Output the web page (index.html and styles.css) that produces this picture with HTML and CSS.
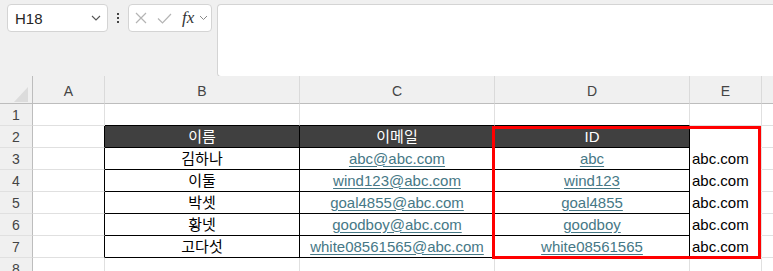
FILE: index.html
```html
<!DOCTYPE html>
<html lang="ko">
<head>
    <meta charset="UTF-8">
    <title>Sheet</title>
    <link rel="stylesheet" href="styles.css">
</head>
<body>
    <div class="toolbar">
        <div class="name-box">
            <span>H18</span>
            <svg class="chev" width="10" height="6" viewBox="0 0 10 6"><path d="M1 1 L5 5 L9 1" fill="none" stroke="#555" stroke-width="1.1"/></svg>
        </div>
        <div class="dots"><i></i><i></i><i></i></div>
        <div class="fx-group">
            <svg width="12" height="12" viewBox="0 0 12 12"><path d="M1 1 L11 11 M11 1 L1 11" stroke="#b4b4b4" stroke-width="1.2"/></svg>
            <svg width="15" height="11" viewBox="0 0 15 11"><path d="M1 5.5 L5.5 10 L14 1" fill="none" stroke="#b4b4b4" stroke-width="1.2"/></svg>
            <span class="fx">fx</span>
            <svg width="9" height="6" viewBox="0 0 9 6"><path d="M1 1 L4.5 4.5 L8 1" fill="none" stroke="#888" stroke-width="1"/></svg>
        </div>
        <div class="formula-input"></div>
    </div>

    <div class="sheet">
        <table class="grid">
            <colgroup>
                <col class="w-rh"><col class="w-narrow"><col class="w-wide"><col class="w-wide"><col class="w-wide"><col class="w-narrow"><col class="w-rest">
            </colgroup>
            <tr class="col-head">
                <th class="corner"><svg width="14" height="15" viewBox="0 0 14 15"><path d="M14 0 L14 15 L0 15 Z" fill="#dcdcdc"/></svg></th>
                <th>A</th><th>B</th><th>C</th><th>D</th><th>E</th><th></th>
            </tr>
            <tr>
                <th class="row-num">1</th>
                <td></td><td class="top-edge"></td><td class="top-edge"></td><td class="top-edge"></td><td></td><td></td>
            </tr>
            <tr>
                <th class="row-num">2</th>
                <td class="left-edge"></td>
                <td class="box head">이름</td>
                <td class="box head">이메일</td>
                <td class="box head">ID</td>
                <td class="blank"></td><td></td>
            </tr>
            <tr>
                <th class="row-num">3</th>
                <td class="left-edge"></td>
                <td class="box">김하나</td>
                <td class="box"><a href="#">abc@abc.com</a></td>
                <td class="box"><a href="#">abc</a></td>
                <td class="blank domain">abc.com</td><td></td>
            </tr>
            <tr>
                <th class="row-num">4</th>
                <td class="left-edge"></td>
                <td class="box">이둘</td>
                <td class="box"><a href="#">wind123@abc.com</a></td>
                <td class="box"><a href="#">wind123</a></td>
                <td class="blank domain">abc.com</td><td></td>
            </tr>
            <tr>
                <th class="row-num">5</th>
                <td class="left-edge"></td>
                <td class="box">박셋</td>
                <td class="box"><a href="#">goal4855@abc.com</a></td>
                <td class="box"><a href="#">goal4855</a></td>
                <td class="blank domain">abc.com</td><td></td>
            </tr>
            <tr>
                <th class="row-num">6</th>
                <td class="left-edge"></td>
                <td class="box">황넷</td>
                <td class="box"><a href="#">goodboy@abc.com</a></td>
                <td class="box"><a href="#">goodboy</a></td>
                <td class="blank domain">abc.com</td><td></td>
            </tr>
            <tr>
                <th class="row-num">7</th>
                <td class="left-edge"></td>
                <td class="box">고다섯</td>
                <td class="box"><a href="#">white08561565@abc.com</a></td>
                <td class="box"><a href="#">white08561565</a></td>
                <td class="blank domain">abc.com</td><td></td>
            </tr>
            <tr>
                <th class="row-num">8</th>
                <td></td><td></td><td></td><td></td><td></td><td></td>
            </tr>
        </table>
        <div class="selection"></div>
    </div>
</body>
</html>
```

FILE: styles.css
```css
body {
    margin: 0;
    background-color: #ffffff;
    font-family: 'Liberation Sans', 'Noto Sans CJK KR', sans-serif;
    overflow: hidden;
}

.toolbar {
    display: flex;
    align-items: flex-start;
    height: 76px;
    padding: 4px 0 0 7px;
    box-sizing: border-box;
    background-color: #f0f0f0;
}

.name-box {
    display: flex;
    align-items: center;
    justify-content: space-between;
    width: 101px;
    height: 28px;
    padding: 0 6px 0 7px;
    box-sizing: border-box;
    background-color: #fff;
    border: 1px solid #d4d4d4;
    border-radius: 4px;
    font-size: 15px;
    color: #262626;
}

.dots {
    display: flex;
    flex-direction: column;
    gap: 2px;
    margin: 9px 9px 0 9px;
}

.dots i {
    display: block;
    width: 2px;
    height: 2px;
    background-color: #444;
}

.fx-group {
    display: flex;
    align-items: center;
    gap: 10px;
    width: 84px;
    height: 28px;
    padding-left: 6px;
    box-sizing: border-box;
    background-color: #fff;
    border: 1px solid #d4d4d4;
    border-radius: 4px;
}

.fx-group .fx {
    font-family: 'Liberation Serif', serif;
    font-style: italic;
    font-size: 17px;
    color: #333;
    margin-right: -5px;
}

.formula-input {
    flex: 1;
    height: 71px;
    margin-left: 5px;
    background-color: #fff;
    border: 1px solid #d4d4d4;
    border-right: none;
    border-radius: 4px 0 0 4px;
}

.sheet {
    position: relative;
}

.grid {
    table-layout: fixed;
    width: 862px;
    border-collapse: separate;
    border-spacing: 0;
}

.w-rh { width: 33px; }
.w-narrow { width: 72px; }
.w-wide { width: 195px; }
.w-rest { width: 100px; }

.grid th,
.grid td {
    box-sizing: border-box;
    padding: 0 2px;
    border-right: 1px solid #e0e0e0;
    border-bottom: 1px solid #e0e0e0;
    height: 22px;
    font-size: 15px;
    line-height: 20px;
    text-align: center;
    white-space: nowrap;
    overflow: hidden;
}

.col-head th {
    height: 28px;
    padding-top: 3px;
    background-color: #f0f0f0;
    border-right-color: #dadada;
    border-bottom-color: #bdbdbd;
    font-weight: normal;
    font-size: 14px;
    color: #444;
}

.col-head th.corner {
    padding: 0 4px 1px 0;
    text-align: right;
    vertical-align: bottom;
    line-height: 0;
    border-right-color: #bdbdbd;
}

.row-num {
    background-color: #f0f0f0;
    border-right-color: #bdbdbd !important;
    font-weight: normal;
    font-size: 14px !important;
    color: #444;
}

.top-edge {
    border-bottom-color: #000 !important;
}

.left-edge {
    border-right-color: #000 !important;
}

.box {
    border-right-color: #000 !important;
    border-bottom-color: #000 !important;
    color: #000;
}

.head {
    background-color: #404040;
    color: #fff;
}

.blank {
    border-bottom-color: #fff !important;
}

.domain {
    text-align: left !important;
    color: #000;
}

.grid a {
    color: #467886;
    text-decoration: underline;
    text-underline-offset: 2px;
}

.selection {
    position: absolute;
    left: 492px;
    top: 50px;
    width: 269px;
    height: 133px;
    box-sizing: border-box;
    border: 3px solid #ff0000;
}
```
